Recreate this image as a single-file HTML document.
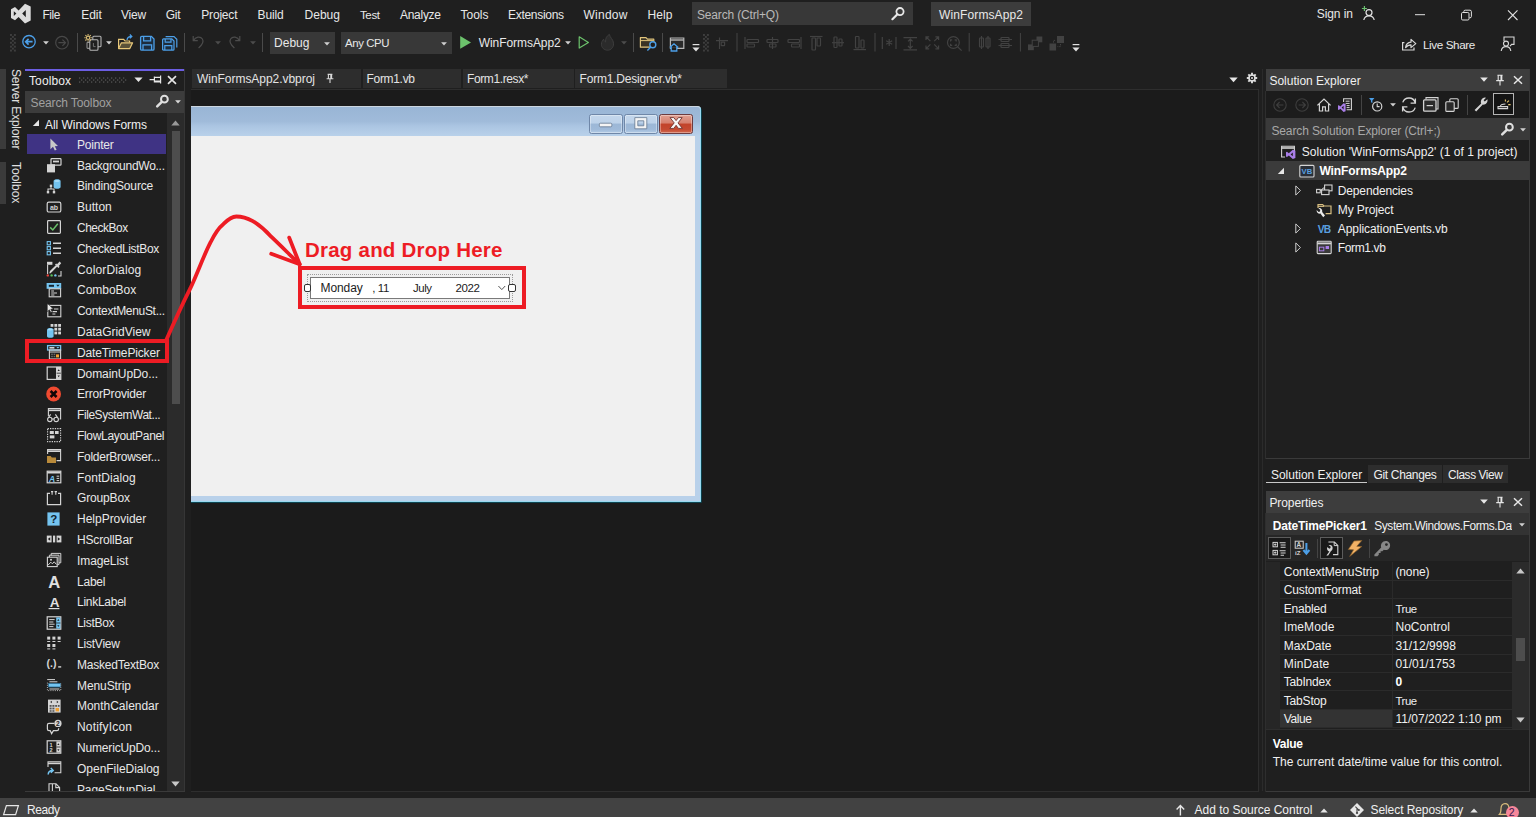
<!DOCTYPE html>
<html lang="en"><head><meta charset="utf-8"><title>WinFormsApp2 - Microsoft Visual Studio</title>
<style>
html,body{margin:0;padding:0;}
body{width:1536px;height:817px;overflow:hidden;background:#1f1f1f;position:relative;font-family:"Liberation Sans",sans-serif;font-size:12px;color:#e6e6e6;}
.r{position:absolute;display:block;}
.t{position:absolute;white-space:pre;line-height:16px;display:block;}
</style></head>
<body>
<!-- p_base -->
<div class="r" style="left:0px;top:69px;width:6px;height:80px;background:#3b3b3b;"></div>
<div class="r" style="left:0px;top:162px;width:6px;height:42px;background:#3b3b3b;"></div>
<span class="t" style="left:24px;top:68.5px;transform-origin:0 0;transform:rotate(90deg);font-size:12px;color:#e0e0e0;letter-spacing:-0.2px;">Server Explorer</span>
<span class="t" style="left:24px;top:162px;transform-origin:0 0;transform:rotate(90deg);font-size:12px;color:#e0e0e0;">Toolbox</span>
<!-- p_top -->
<svg class="r" style="left:0px;top:0px;" width="40" height="28" viewBox="0 0 40 28"><path d="M25 3.8 L30.7 6.5 V20.4 L25 23.5 L18.6 16.9 L15 20.3 L11 18 V9.3 L15 7 L18.6 10.4 Z M13.8 11.2 V16 L16.4 13.6 Z M25.8 10 L22.2 13.6 L25.8 17.3 Z" fill="#dcdcdc" fill-rule="evenodd"/></svg>
<span class="t" style="left:42.50px;top:7px;font-size:11.92px;color:#e8e8e8;letter-spacing:-0.401px;">File</span>
<span class="t" style="left:81.25px;top:7px;font-size:12px;color:#e8e8e8;letter-spacing:-0.059px;">Edit</span>
<span class="t" style="left:121.00px;top:7px;font-size:12px;color:#e8e8e8;letter-spacing:-0.191px;">View</span>
<span class="t" style="left:165.75px;top:7px;font-size:12px;color:#e8e8e8;letter-spacing:-0.293px;">Git</span>
<span class="t" style="left:201.25px;top:7px;font-size:12px;color:#e8e8e8;letter-spacing:-0.182px;">Project</span>
<span class="t" style="left:257.50px;top:7px;font-size:12px;color:#e8e8e8;letter-spacing:-0.109px;">Build</span>
<span class="t" style="left:304.50px;top:7px;font-size:12px;color:#e8e8e8;letter-spacing:0.034px;">Debug</span>
<span class="t" style="left:360.00px;top:7px;font-size:11.56px;color:#e8e8e8;letter-spacing:-0.400px;">Test</span>
<span class="t" style="left:400.00px;top:7px;font-size:12px;color:#e8e8e8;letter-spacing:-0.283px;">Analyze</span>
<span class="t" style="left:460.50px;top:7px;font-size:12px;color:#e8e8e8;letter-spacing:-0.002px;">Tools</span>
<span class="t" style="left:508.00px;top:7px;font-size:12px;color:#e8e8e8;letter-spacing:-0.300px;">Extensions</span>
<span class="t" style="left:583.50px;top:7px;font-size:12px;color:#e8e8e8;letter-spacing:0.258px;">Window</span>
<span class="t" style="left:647.50px;top:7px;font-size:12px;color:#e8e8e8;letter-spacing:0.105px;">Help</span>
<div class="r" style="left:692px;top:2.4px;width:221px;height:22.3px;background:#383838;"></div>
<span class="t" style="left:697.00px;top:7px;font-size:12px;color:#b8b8b8;letter-spacing:-0.168px;">Search (Ctrl+Q)</span>
<svg class="r" style="left:890px;top:6px;" width="16" height="16" viewBox="0 0 16 16"><circle cx="10" cy="5.6" r="3.6" fill="none" stroke="#e8e8e8" stroke-width="1.8"/><path d="M7.4 8.2 L2.4 13.2" stroke="#e8e8e8" stroke-width="2.2" stroke-linecap="round"/></svg>
<div class="r" style="left:931px;top:2px;width:100px;height:24.2px;background:#3c3c3c;"></div>
<span class="t" style="left:939.00px;top:7px;font-size:12px;color:#e8e8e8;letter-spacing:0.119px;">WinFormsApp2</span>
<span class="t" style="left:1316.70px;top:6px;font-size:12px;color:#e8e8e8;letter-spacing:-0.066px;">Sign in</span>
<svg class="r" style="left:1360px;top:6px;" width="16" height="16" viewBox="0 0 16 16"><circle cx="9" cy="6.6" r="3" fill="none" stroke="#e0e0e0" stroke-width="1.2"/><path d="M3.8 14 C4.4 10.6 6.6 9.8 9 9.8 C11.4 9.8 13.6 10.6 14.2 14" fill="none" stroke="#e0e0e0" stroke-width="1.2"/><path d="M4.4 0 V5 M1.9 2.5 H6.9" stroke="#6cc070" stroke-width="1.2"/></svg>
<svg class="r" style="left:1412px;top:7px;" width="16" height="16" viewBox="0 0 16 16"><path d="M3 7.7 H13" stroke="#e0e0e0" stroke-width="1"/></svg>
<svg class="r" style="left:1458px;top:7px;" width="16" height="16" viewBox="0 0 16 16"><rect x="3.5" y="5.5" width="7.5" height="7.5" rx="1.2" fill="none" stroke="#e0e0e0" stroke-width="1"/><path d="M5.8 5.2 V4.6 Q5.8 3.2 7.2 3.2 H12 Q13.4 3.2 13.4 4.6 V9.4 Q13.4 10.8 12 10.8 H11.3" fill="none" stroke="#e0e0e0" stroke-width="1"/></svg>
<svg class="r" style="left:1505px;top:7px;" width="16" height="16" viewBox="0 0 16 16"><path d="M3 3.3 L12.5 13 M12.5 3.3 L3 13" stroke="#e0e0e0" stroke-width="1.1"/></svg>
<svg class="r" style="left:10px;top:34px;" width="6" height="18" viewBox="0 0 6 18"><rect x="0.00" y="0.00" width="1.95" height="1.95" fill="#3e3e3e"/><rect x="3.90" y="0.00" width="1.95" height="1.95" fill="#3e3e3e"/><rect x="1.95" y="1.95" width="1.95" height="1.95" fill="#3e3e3e"/><rect x="0.00" y="3.90" width="1.95" height="1.95" fill="#3e3e3e"/><rect x="3.90" y="3.90" width="1.95" height="1.95" fill="#3e3e3e"/><rect x="1.95" y="5.85" width="1.95" height="1.95" fill="#3e3e3e"/><rect x="0.00" y="7.80" width="1.95" height="1.95" fill="#3e3e3e"/><rect x="3.90" y="7.80" width="1.95" height="1.95" fill="#3e3e3e"/><rect x="1.95" y="9.75" width="1.95" height="1.95" fill="#3e3e3e"/><rect x="0.00" y="11.70" width="1.95" height="1.95" fill="#3e3e3e"/><rect x="3.90" y="11.70" width="1.95" height="1.95" fill="#3e3e3e"/><rect x="1.95" y="13.65" width="1.95" height="1.95" fill="#3e3e3e"/><rect x="0.00" y="15.60" width="1.95" height="1.95" fill="#3e3e3e"/><rect x="3.90" y="15.60" width="1.95" height="1.95" fill="#3e3e3e"/></svg>
<svg class="r" style="left:21.2px;top:34.3px;" width="16" height="16" viewBox="0 0 16 16"><circle cx="8" cy="7.7" r="6.2" fill="none" stroke="#4c9fe8" stroke-width="1.3"/><path d="M11.6 7.7 H4.8 M7.6 4.8 L4.7 7.7 L7.6 10.6" fill="none" stroke="#4c9fe8" stroke-width="1.7"/></svg>
<svg class="r" style="left:43px;top:41.4px;" width="6" height="4" viewBox="0 0 6 4"><path d="M0.1 0.3 H5.9 L3 3.6 Z" fill="#d0d0d0"/></svg>
<svg class="r" style="left:53.7px;top:35px;" width="16" height="16" viewBox="0 0 16 16"><circle cx="8" cy="7.7" r="6.3" fill="none" stroke="#484848" stroke-width="1.2"/><path d="M4.4 7.7 H11.4 M8.4 4.6 L11.5 7.7 L8.4 10.8" fill="none" stroke="#484848" stroke-width="1.2"/></svg>
<div class="r" style="left:77.0px;top:33px;width:1.0px;height:19px;background:#4a4a4a;"></div>
<svg class="r" style="left:82px;top:32px;" width="22" height="22" viewBox="82 32 22 22"><g fill="#1f1f1f" stroke="#b4b4b4" stroke-width="1.1"><rect x="92.8" y="36.3" width="8.2" height="10.4" rx="1"/><rect x="87" y="42.4" width="5" height="6" rx="0.8" stroke="#909090"/><rect x="89.8" y="39.8" width="8.2" height="10.4" rx="1"/></g><path d="M93.4 43 V46.6 H95.6" fill="none" stroke="#707070" stroke-width="1"/><g stroke="#d8bc74" stroke-width="1.1" fill="none"><circle cx="88.1" cy="37.8" r="1.7" fill="#1f1f1f"/><path d="M88.1 34 V35.4 M88.1 40.2 V41.6 M84.3 37.8 H85.7 M90.5 37.8 H91.9 M85.4 35.1 L86.4 36.1 M89.8 39.5 L90.8 40.5 M90.8 35.1 L89.8 36.1 M86.4 39.5 L85.4 40.5"/></g></svg>
<svg class="r" style="left:106px;top:41.4px;" width="6" height="4" viewBox="0 0 6 4"><path d="M0.1 0.3 H5.9 L3 3.6 Z" fill="#d0d0d0"/></svg>
<svg class="r" style="left:117px;top:34px;" width="18" height="18" viewBox="0 0 18 18"><path d="M1.6 14.6 V5.4 H6.6 L8 7 H12.6 V8.6" fill="none" stroke="#e8c87a" stroke-width="1.2"/><path d="M1.6 14.6 L4.4 8.8 H15.6 L12.8 14.6 Z" fill="#5b5238" stroke="#e8c87a" stroke-width="1.2" stroke-linejoin="round"/><path d="M10 6 C10.4 3.4 12.2 2.4 14.6 2.4 M12.8 0.6 L14.8 2.4 L12.8 4.4" fill="none" stroke="#4c9fe8" stroke-width="1.3"/></svg>
<svg class="r" style="left:139px;top:35px;" width="17" height="17" viewBox="0 0 17 17"><path d="M1.6 2.6 Q1.6 1.4 2.8 1.4 H12.4 L15 4 V14 Q15 15.2 13.8 15.2 H2.8 Q1.6 15.2 1.6 14 Z" fill="#1d2c3c" stroke="#4c9fe8" stroke-width="1.3"/><path d="M4.6 1.6 V5.8 H11.6 V1.6 M4 15 V9.8 H12.6 V15" fill="none" stroke="#4c9fe8" stroke-width="1.3"/></svg>
<svg class="r" style="left:160.5px;top:35px;" width="17" height="17" viewBox="0 0 17 17"><path d="M4.6 1.6 H13 L15.8 4.2 V12.4" fill="none" stroke="#4c9fe8" stroke-width="1.2"/><path d="M1.6 4.8 Q1.6 3.8 2.6 3.8 H10.8 L13 6 V14.2 Q13 15.2 12 15.2 H2.6 Q1.6 15.2 1.6 14.2 Z" fill="#1d2c3c" stroke="#4c9fe8" stroke-width="1.2"/><path d="M4.2 4 V7.2 H10 V4 M3.8 15 V10.6 H10.8 V15" fill="none" stroke="#4c9fe8" stroke-width="1.2"/></svg>
<div class="r" style="left:183.5px;top:33px;width:1.0px;height:19px;background:#4a4a4a;"></div>
<svg class="r" style="left:191px;top:34px;" width="16" height="16" viewBox="0 0 16 16"><path d="M2.2 2 V6.6 H6.8 M2.6 6.4 C4.4 2.6 9.4 2 11.4 5 C13 7.6 11.6 10.4 7.6 14" fill="none" stroke="#4c4c4c" stroke-width="1.2"/></svg>
<svg class="r" style="left:214.5px;top:41.4px;" width="6" height="4" viewBox="0 0 6 4"><path d="M0.1 0.3 H5.9 L3 3.6 Z" fill="#4c4c4c"/></svg>
<svg class="r" style="left:226px;top:34px;" width="16" height="16" viewBox="0 0 16 16"><path d="M13.8 2 V6.6 H9.2 M13.4 6.4 C11.6 2.6 6.6 2 4.6 5 C3 7.6 4.4 10.4 8.4 14" fill="none" stroke="#4c4c4c" stroke-width="1.2"/></svg>
<svg class="r" style="left:249.5px;top:41.4px;" width="6" height="4" viewBox="0 0 6 4"><path d="M0.1 0.3 H5.9 L3 3.6 Z" fill="#4c4c4c"/></svg>
<div class="r" style="left:262.0px;top:33px;width:1.0px;height:19px;background:#4a4a4a;"></div>
<div class="r" style="left:270px;top:32px;width:64.5px;height:21.5px;background:#383838;"></div>
<span class="t" style="left:274.00px;top:35px;font-size:12px;color:#e8e8e8;letter-spacing:0.034px;">Debug</span>
<svg class="r" style="left:323.5px;top:41.9px;" width="6" height="4" viewBox="0 0 6 4"><path d="M0.1 0.3 H5.9 L3 3.6 Z" fill="#d0d0d0"/></svg>
<div class="r" style="left:341px;top:32px;width:110.5px;height:21.5px;background:#383838;"></div>
<span class="t" style="left:345.00px;top:35px;font-size:11.41px;color:#e8e8e8;letter-spacing:-0.403px;">Any CPU</span>
<svg class="r" style="left:440.5px;top:41.9px;" width="6" height="4" viewBox="0 0 6 4"><path d="M0.1 0.3 H5.9 L3 3.6 Z" fill="#d0d0d0"/></svg>
<svg class="r" style="left:459px;top:35px;" width="14" height="15" viewBox="0 0 14 15"><path d="M1.2 1 L12 7.4 L1.2 13.8 Z" fill="#6cc26c"/></svg>
<span class="t" style="left:478.75px;top:35px;font-size:12px;color:#e8e8e8;letter-spacing:-0.063px;">WinFormsApp2</span>
<svg class="r" style="left:565px;top:41.4px;" width="6" height="4" viewBox="0 0 6 4"><path d="M0.1 0.3 H5.9 L3 3.6 Z" fill="#d0d0d0"/></svg>
<svg class="r" style="left:577px;top:35px;" width="14" height="15" viewBox="0 0 14 15"><path d="M2.2 1.8 L11.4 7.4 L2.2 13 Z" fill="none" stroke="#6cc26c" stroke-width="1.2" stroke-linejoin="round"/></svg>
<svg class="r" style="left:599px;top:33px;" width="18" height="19" viewBox="0 0 18 19"><path d="M10.4 1.4 C10.6 4.4 14.6 6.4 14.6 10.8 C14.6 14.6 11.8 17.2 8.6 17.2 C5.2 17.2 2.4 14.8 2.4 11.2 C2.4 9 3.6 7.4 4.6 6.2 C5 7.8 5.6 8.6 6.6 9 C6.2 5.4 7.8 2.8 10.4 1.4 Z" fill="#2b2b2b" stroke="#3d3d3d" stroke-width="1"/></svg>
<svg class="r" style="left:620.75px;top:41.4px;" width="6" height="4" viewBox="0 0 6 4"><path d="M0.1 0.3 H5.9 L3 3.6 Z" fill="#4c4c4c"/></svg>
<div class="r" style="left:632.5px;top:33px;width:1.0px;height:19px;background:#4a4a4a;"></div>
<svg class="r" style="left:638px;top:33px;" width="20" height="20" viewBox="638 33 20 20"><path d="M640.4 47.2 V37.6 H646 L647.4 39.2 H653.8 V47.2 Z" fill="#3a3325" stroke="#e0c47c" stroke-width="1.2" stroke-linejoin="round"/><path d="M640.6 40.6 H653.6" stroke="#e0c47c" stroke-width="1"/><circle cx="652.8" cy="44.8" r="3" fill="#1f1f1f" stroke="#4c9fe8" stroke-width="1.4"/><path d="M650.6 47.2 L647.4 50.6" stroke="#4c9fe8" stroke-width="1.4"/></svg>
<div class="r" style="left:662.0px;top:33px;width:1.0px;height:19px;background:#4a4a4a;"></div>
<svg class="r" style="left:667px;top:34px;" width="20" height="20" viewBox="667 34 20 20"><path d="M670.4 38 H683.8 V48.4 H670.4 Z" fill="#2a2a2a" stroke="#b8b8b8" stroke-width="1.2"/><path d="M670.4 40 H683.8" stroke="#b8b8b8" stroke-width="1.4"/><path d="M669.8 47.6 L674 43.8 L678.2 47.6 M671.2 46.8 V51 H676.8 V46.8" fill="#1f1f1f" stroke="#4c9fe8" stroke-width="1.3"/></svg>
<svg class="r" style="left:692.2px;top:43.9px;" width="8" height="9" viewBox="0 0 8 9"><path d="M0.6 0.6 H7.4" stroke="#e0e0e0" stroke-width="1.2"/><path d="M0.4 3.4 H7.6 L4 7.4 Z" fill="#e0e0e0"/></svg>
<svg class="r" style="left:703px;top:34px;" width="6" height="18" viewBox="0 0 6 18"><rect x="0.00" y="0.00" width="1.95" height="1.95" fill="#3e3e3e"/><rect x="3.90" y="0.00" width="1.95" height="1.95" fill="#3e3e3e"/><rect x="1.95" y="1.95" width="1.95" height="1.95" fill="#3e3e3e"/><rect x="0.00" y="3.90" width="1.95" height="1.95" fill="#3e3e3e"/><rect x="3.90" y="3.90" width="1.95" height="1.95" fill="#3e3e3e"/><rect x="1.95" y="5.85" width="1.95" height="1.95" fill="#3e3e3e"/><rect x="0.00" y="7.80" width="1.95" height="1.95" fill="#3e3e3e"/><rect x="3.90" y="7.80" width="1.95" height="1.95" fill="#3e3e3e"/><rect x="1.95" y="9.75" width="1.95" height="1.95" fill="#3e3e3e"/><rect x="0.00" y="11.70" width="1.95" height="1.95" fill="#3e3e3e"/><rect x="3.90" y="11.70" width="1.95" height="1.95" fill="#3e3e3e"/><rect x="1.95" y="13.65" width="1.95" height="1.95" fill="#3e3e3e"/><rect x="0.00" y="15.60" width="1.95" height="1.95" fill="#3e3e3e"/><rect x="3.90" y="15.60" width="1.95" height="1.95" fill="#3e3e3e"/></svg>
<svg class="r" style="left:710px;top:30px;" width="385" height="26" viewBox="710 30 385 26"><g fill="none" stroke="#424242" stroke-width="1.2"><path d="M716 40.6 H728 M719.5 37.5 V49"/><rect x="721.2" y="42.2" width="3.4" height="3.4" rx="0.4"/><path d="M745 37 V49"/><rect x="747" y="39.5" width="11.5" height="3.0" rx="0.7"/><rect x="747" y="44" width="7.5" height="3" rx="0.7"/><path d="M772.5 37 V49"/><rect x="767" y="39.5" width="11" height="3.0" rx="0.7"/><rect x="769.5" y="44" width="6.5" height="3" rx="0.7"/><path d="M801 37 V49"/><rect x="788" y="39.5" width="11.5" height="3.0" rx="0.7"/><rect x="791.5" y="44" width="8.0" height="3" rx="0.7"/><path d="M810 36.5 H822.5"/><rect x="812" y="38" width="3.5" height="12" rx="0.7"/><rect x="817" y="38" width="3.5" height="8" rx="0.7"/><path d="M832 42.7 H844"/><rect x="834" y="37" width="3" height="10.5" rx="0.7"/><rect x="839" y="39" width="3" height="7" rx="0.7"/><path d="M853.5 49.6 H866"/><rect x="855.5" y="36.5" width="3.5" height="11.5" rx="0.7"/><rect x="861" y="40" width="3" height="8" rx="0.7"/><path d="M882.3 37 V49 M896 37 V49 M889.2 39 V46 M886.2 40.8 L892.2 44.2 M892.2 40.8 L886.2 44.2"/><path d="M903.5 37.6 H917 M903.5 49.8 H917 M910.3 39 V48.4 M908 41.4 L910.3 39 L912.6 41.4 M908 46 L910.3 48.4 L912.6 46"/><path d="M926 40 V36.8 H929.2 M935.4 36.8 H938.6 V40 M938.6 45.6 V48.8 H935.4 M929.2 48.8 H926 V45.6 M926.2 37 L930.4 41.2 M938.4 37 L934.2 41.2 M938.4 48.6 L934.2 44.4 M926.2 48.6 L930.4 44.4"/><circle cx="953.4" cy="42.5" r="5.9"/><path d="M957.6 46.8 L961.6 50.6 M950.6 41.4 V39.8 H952.2 M954.6 39.8 H956.2 V41.4 M956.2 43.8 V45.4 H954.6 M952.2 45.4 H950.6 V43.8"/><path d="M981.5 36 V49 M988 36 V49"/><rect x="979.5" y="38" width="4.0" height="9" rx="0.7"/><rect x="986" y="38" width="4" height="9" rx="0.7"/><path d="M998.5 39.5 H1012 M998.5 45.5 H1012"/><rect x="1001" y="37.5" width="8" height="4.0" rx="0.7"/><rect x="1001" y="43.5" width="8" height="4.0" rx="0.7"/></g><g fill="#424242"><rect x="1036.5" y="36.5" width="5.8" height="5.8"/><rect x="1028" y="44.4" width="5.8" height="5.8"/><rect x="1057" y="36" width="7" height="7"/><rect x="1049.5" y="43.5" width="6.6" height="7"/></g><rect x="1032.2" y="40.2" width="6.2" height="6.2" fill="#1f1f1f" stroke="#424242" stroke-width="1"/><path d="M1053.5 42.6 V40.4 H1056 M1060.5 44 V46.6 H1057.5" fill="none" stroke="#424242" stroke-width="1" stroke-dasharray="1.4 1"/><path d="M737 33 V51.5" stroke="#444" stroke-width="1"/><path d="M875 33 V51.5" stroke="#444" stroke-width="1"/><path d="M969.2 33 V51.5" stroke="#444" stroke-width="1"/><path d="M1020.4 33 V51.5" stroke="#444" stroke-width="1"/></svg>
<svg class="r" style="left:1072.2px;top:44.1px;" width="8" height="9" viewBox="0 0 8 9"><path d="M0.6 0.6 H7.4" stroke="#e0e0e0" stroke-width="1.2"/><path d="M0.4 3.4 H7.6 L4 7.4 Z" fill="#e0e0e0"/></svg>
<svg class="r" style="left:1401px;top:36px;" width="17" height="16" viewBox="0 0 17 16"><path d="M3.4 6.6 H1.6 V14 H13 V11.6" fill="none" stroke="#d8d8d8" stroke-width="1.2"/><path d="M4.6 11.6 C5 8 7.4 6.4 10 6.2 V3.4 L14.8 7.6 L10 11.6 V8.8 C7.8 8.8 6 9.6 4.6 11.6 Z" fill="none" stroke="#d8d8d8" stroke-width="1.2" stroke-linejoin="round"/></svg>
<span class="t" style="left:1423.00px;top:37px;font-size:11.69px;color:#e8e8e8;letter-spacing:-0.399px;">Live Share</span>
<svg class="r" style="left:1499px;top:35px;" width="17" height="17" viewBox="0 0 17 17"><path d="M5 6 V2 H15 V9.4 H12.6 L11 11.2" fill="none" stroke="#d8d8d8" stroke-width="1.1"/><circle cx="7" cy="8.6" r="2.5" fill="#1f1f1f" stroke="#d8d8d8" stroke-width="1.1"/><path d="M2.2 16 C2.6 12.6 4.6 11.6 7 11.6 C9.4 11.6 11.4 12.6 11.8 16" fill="none" stroke="#d8d8d8" stroke-width="1.1"/></svg>
<!-- p_toolbox -->
<div class="r" style="left:25px;top:69.2px;width:159px;height:1.8999999999999915px;background:#6c5ee2;"></div>
<div class="r" style="left:25px;top:71px;width:159px;height:20px;background:#1f1f1f;"></div>
<span class="t" style="left:29.00px;top:73px;font-size:12px;color:#f0f0f0;letter-spacing:0.106px;">Toolbox</span>
<svg class="r" style="left:79px;top:77px;" width="49" height="7" viewBox="0 0 49 7"><rect x="0" y="0.4" width="1.3" height="1.3" fill="#555"/><rect x="4" y="0.4" width="1.3" height="1.3" fill="#555"/><rect x="8" y="0.4" width="1.3" height="1.3" fill="#555"/><rect x="12" y="0.4" width="1.3" height="1.3" fill="#555"/><rect x="16" y="0.4" width="1.3" height="1.3" fill="#555"/><rect x="20" y="0.4" width="1.3" height="1.3" fill="#555"/><rect x="24" y="0.4" width="1.3" height="1.3" fill="#555"/><rect x="28" y="0.4" width="1.3" height="1.3" fill="#555"/><rect x="32" y="0.4" width="1.3" height="1.3" fill="#555"/><rect x="36" y="0.4" width="1.3" height="1.3" fill="#555"/><rect x="40" y="0.4" width="1.3" height="1.3" fill="#555"/><rect x="44" y="0.4" width="1.3" height="1.3" fill="#555"/><rect x="2" y="2.4" width="1.3" height="1.3" fill="#555"/><rect x="6" y="2.4" width="1.3" height="1.3" fill="#555"/><rect x="10" y="2.4" width="1.3" height="1.3" fill="#555"/><rect x="14" y="2.4" width="1.3" height="1.3" fill="#555"/><rect x="18" y="2.4" width="1.3" height="1.3" fill="#555"/><rect x="22" y="2.4" width="1.3" height="1.3" fill="#555"/><rect x="26" y="2.4" width="1.3" height="1.3" fill="#555"/><rect x="30" y="2.4" width="1.3" height="1.3" fill="#555"/><rect x="34" y="2.4" width="1.3" height="1.3" fill="#555"/><rect x="38" y="2.4" width="1.3" height="1.3" fill="#555"/><rect x="42" y="2.4" width="1.3" height="1.3" fill="#555"/><rect x="46" y="2.4" width="1.3" height="1.3" fill="#555"/><rect x="0" y="4.4" width="1.3" height="1.3" fill="#555"/><rect x="4" y="4.4" width="1.3" height="1.3" fill="#555"/><rect x="8" y="4.4" width="1.3" height="1.3" fill="#555"/><rect x="12" y="4.4" width="1.3" height="1.3" fill="#555"/><rect x="16" y="4.4" width="1.3" height="1.3" fill="#555"/><rect x="20" y="4.4" width="1.3" height="1.3" fill="#555"/><rect x="24" y="4.4" width="1.3" height="1.3" fill="#555"/><rect x="28" y="4.4" width="1.3" height="1.3" fill="#555"/><rect x="32" y="4.4" width="1.3" height="1.3" fill="#555"/><rect x="36" y="4.4" width="1.3" height="1.3" fill="#555"/><rect x="40" y="4.4" width="1.3" height="1.3" fill="#555"/><rect x="44" y="4.4" width="1.3" height="1.3" fill="#555"/></svg>
<svg class="r" style="left:134px;top:77px;" width="9" height="6" viewBox="0 0 9 6"><path d="M0.4 0.6 H8.6 L4.5 5 Z" fill="#e6e6e6"/></svg>
<svg class="r" style="left:149px;top:74.4px;" width="14" height="11" viewBox="0 0 14 11"><path d="M0.6 5.6 H5.4 M5.4 2.6 V8.6 M5.4 3.4 H11.4 M5.4 7.2 H11.4 M5.4 8 H11.4 M11.6 1.6 V9.6" fill="none" stroke="#e6e6e6" stroke-width="1.2"/></svg>
<svg class="r" style="left:167px;top:75px;" width="10" height="10" viewBox="0 0 10 10"><path d="M1 1.2 L9 8.8 M9 1.2 L1 8.8" stroke="#e6e6e6" stroke-width="1.7"/></svg>
<div class="r" style="left:25px;top:91px;width:159px;height:22px;background:#3c3c3c;"></div>
<span class="t" style="left:30.50px;top:95px;font-size:12px;color:#a0a0a0;letter-spacing:-0.115px;">Search Toolbox</span>
<svg class="r" style="left:155px;top:94px;" width="15" height="15" viewBox="0 0 15 15"><circle cx="9.4" cy="5.2" r="3.4" fill="none" stroke="#e0e0e0" stroke-width="2"/><path d="M6.8 7.8 L2.2 12.4" stroke="#e0e0e0" stroke-width="2.5" stroke-linecap="round"/></svg>
<svg class="r" style="left:174.5px;top:100px;" width="6" height="4" viewBox="0 0 6 4"><path d="M0.1 0.3 H5.9 L3 3.6 Z" fill="#d8d8d8"/></svg>
<div class="r" style="left:25px;top:113px;width:159px;height:678px;background:#1f1f1f;"></div>
<div class="r" style="left:25px;top:790.5px;width:160px;height:1.0px;background:#3a3a3a;"></div>
<div class="r" style="left:184px;top:69px;width:1px;height:722px;background:#363636;"></div>
<div class="r" style="left:167px;top:113px;width:17px;height:678px;background:#2b2b2b;"></div>
<div class="r" style="left:171.5px;top:131px;width:8.5px;height:273px;background:#4d4d4d;"></div>
<svg class="r" style="left:171px;top:119.5px;" width="9" height="6" viewBox="0 0 9 6"><path d="M0.3 5.6 H8.7 L4.5 0.6 Z" fill="#999"/></svg>
<svg class="r" style="left:171px;top:780.5px;" width="9" height="6" viewBox="0 0 9 6"><path d="M0.3 0.4 H8.7 L4.5 5.4 Z" fill="#c8c8c8"/></svg>
<svg class="r" style="left:32px;top:119px;" width="8" height="8" viewBox="0 0 8 8"><path d="M7 0.8 V7 H0.8 Z" fill="#e6e6e6"/></svg>
<span class="t" style="left:45.00px;top:117px;font-size:12px;color:#f0f0f0;letter-spacing:-0.043px;">All Windows Forms</span>
<div class="r" style="left:27px;top:134.3px;width:139px;height:19.899999999999977px;background:#3f3384;"></div>
<div class="r" style="left:25px;top:113px;width:142px;height:677.5px;overflow:hidden;">
<svg class="r" style="left:20.5px;top:23.25px;" width="16" height="16" viewBox="0 0 16 16"><path d="M4.4 2.4 V13.2 L7 10.8 L8.8 14.6 L10.6 13.8 L8.8 10.2 L12 10 Z" fill="#c8c8c8"/></svg>
<span class="t" style="left:52.00px;top:24px;font-size:12px;color:#e8e8e8;letter-spacing:-0.211px;">Pointer</span>
<svg class="r" style="left:20.5px;top:44.05px;" width="16" height="16" viewBox="0 0 16 16"><rect x="5" y="1.6" width="10" height="6.6" rx="0.8" fill="none" stroke="#d4d4d4" stroke-width="1.2"/><rect x="7" y="3.6" width="6" height="1.8" fill="#d4d4d4"/><rect x="1" y="7.2" width="8" height="8.2" fill="#d4d4d4"/></svg>
<span class="t" style="left:52.00px;top:45px;font-size:12px;color:#e8e8e8;letter-spacing:-0.273px;">BackgroundWo...</span>
<svg class="r" style="left:20.5px;top:64.85px;" width="16" height="16" viewBox="0 0 16 16"><path d="M7.6 3 C7.6 0.6 14.6 0.6 14.6 3 V9 C14.6 11.4 7.6 11.4 7.6 9 Z" fill="#74c4f0"/><ellipse cx="11.1" cy="3" rx="2.6" ry="1" fill="#a8dcf8"/><path d="M5 8.6 V11 M2 13.6 V11 H8 V13.6" fill="none" stroke="#d4d4d4" stroke-width="1.1"/><rect x="3.8" y="6.6" width="2.4" height="2.4" fill="#d4d4d4"/><rect x="0.8" y="13" width="2.4" height="2.4" fill="#d4d4d4"/><rect x="6.8" y="13" width="2.4" height="2.4" fill="#d4d4d4"/></svg>
<span class="t" style="left:52.00px;top:65px;font-size:12px;color:#e8e8e8;letter-spacing:-0.150px;">BindingSource</span>
<svg class="r" style="left:20.5px;top:85.65px;" width="16" height="16" viewBox="0 0 16 16"><rect x="1.2" y="3.2" width="13.6" height="9.8" rx="1.6" fill="none" stroke="#d4d4d4" stroke-width="1.2"/><text x="3.9" y="10.6" font-family="Liberation Sans,sans-serif" font-size="7" font-weight="bold" fill="#d4d4d4">ab</text></svg>
<span class="t" style="left:52.00px;top:86px;font-size:12px;color:#e8e8e8;letter-spacing:0.012px;">Button</span>
<svg class="r" style="left:20.5px;top:106.45px;" width="16" height="16" viewBox="0 0 16 16"><rect x="1.6" y="1.6" width="12.8" height="12.8" rx="0.8" fill="none" stroke="#d4d4d4" stroke-width="1.2"/><path d="M4.2 8.4 L6.8 11 L11.8 4.8" fill="none" stroke="#6cc26c" stroke-width="1.5"/></svg>
<span class="t" style="left:52.00px;top:107px;font-size:11.86px;color:#e8e8e8;letter-spacing:-0.401px;">CheckBox</span>
<svg class="r" style="left:20.5px;top:127.25px;" width="16" height="16" viewBox="0 0 16 16"><g fill="none" stroke="#74c4f0" stroke-width="1.1"><rect x="1.2" y="1.6" width="3.2" height="3.2"/><rect x="1.2" y="6.6" width="3.2" height="3.2"/><rect x="1.2" y="11.6" width="3.2" height="3.2"/></g><path d="M7 3.2 H15 M7 8.2 H15 M7 13.2 H15" stroke="#d4d4d4" stroke-width="1.6"/></svg>
<span class="t" style="left:52.00px;top:128px;font-size:12px;color:#e8e8e8;letter-spacing:-0.343px;">CheckedListBox</span>
<svg class="r" style="left:20.5px;top:148.05px;" width="16" height="16" viewBox="0 0 16 16"><rect x="1" y="0.8" width="5.4" height="3" fill="#d4d4d4"/><path d="M1.6 4 V13 M12 15 H15 V10" fill="none" stroke="#d4d4d4" stroke-width="1.1"/><path d="M13.6 0.6 L15.2 2.2 L12.8 5 L13.6 5.8 L12.4 7 L9 3.6 L10.2 2.4 L11 3.2 Z" fill="#d4d4d4"/><path d="M10.6 5.4 L5.2 10.8 L4 11.8 L4.6 10.2 L10 4.8 Z" fill="#d4d4d4" stroke="#d4d4d4" stroke-width="1.2" stroke-linejoin="round"/><circle cx="1.8" cy="14.4" r="1.2" fill="#e8423a"/><circle cx="5.6" cy="14.4" r="1.2" fill="#5cc25c"/><circle cx="9.4" cy="14.4" r="1.2" fill="#74c4f0"/></svg>
<span class="t" style="left:52.00px;top:149px;font-size:12px;color:#e8e8e8;letter-spacing:0.155px;">ColorDialog</span>
<svg class="r" style="left:20.5px;top:168.85px;" width="16" height="16" viewBox="0 0 16 16"><rect x="0.6" y="1" width="14.6" height="5.8" fill="#74c4f0"/><rect x="2.8" y="2.8" width="5.2" height="2" fill="#16242e"/><path d="M10.2 2.8 H13.6 L11.9 4.8 Z" fill="#16242e"/><rect x="3.2" y="6.8" width="11.4" height="8" fill="none" stroke="#d4d4d4" stroke-width="1.1"/><path d="M5.2 9 H8 M5.2 11 H11 M5.2 13 H8.4" stroke="#d4d4d4" stroke-width="1"/></svg>
<span class="t" style="left:52.00px;top:169px;font-size:12px;color:#e8e8e8;letter-spacing:-0.016px;">ComboBox</span>
<svg class="r" style="left:20.5px;top:189.65px;" width="16" height="16" viewBox="0 0 16 16"><rect x="1.8" y="2.4" width="13" height="11.4" fill="none" stroke="#d4d4d4" stroke-width="1.1"/><path d="M8 6 H12.4 M6.4 8.6 H11 M6.4 11 H9.4" stroke="#d4d4d4" stroke-width="1.1"/><path d="M1.4 0.4 V8.6 L3.4 6.8 L4.8 9.6 L6.2 8.8 L4.8 6.2 L7.4 6 Z" fill="#e8e8e8" stroke="#1f1f1f" stroke-width="0.6"/></svg>
<span class="t" style="left:52.00px;top:190px;font-size:12px;color:#e8e8e8;letter-spacing:-0.314px;">ContextMenuSt...</span>
<svg class="r" style="left:20.5px;top:210.45px;" width="16" height="16" viewBox="0 0 16 16"><g fill="#d4d4d4"><rect x="4.6" y="1" width="2.8" height="2.8"/><rect x="8.4" y="1" width="2.8" height="2.8"/><rect x="12.2" y="1" width="2.8" height="2.8"/><rect x="8.4" y="4.8" width="2.8" height="2.8"/><rect x="12.2" y="4.8" width="2.8" height="2.8"/><rect x="8.4" y="8.6" width="2.8" height="2.8"/><rect x="12.2" y="8.6" width="2.8" height="2.8"/></g><path d="M1 6.6 C1 4.4 7.6 4.4 7.6 6.6 V13.2 C7.6 15.4 1 15.4 1 13.2 Z" fill="#74c4f0"/><ellipse cx="4.3" cy="6.6" rx="2.5" ry="0.9" fill="#a8dcf8"/></svg>
<span class="t" style="left:52.00px;top:211px;font-size:12px;color:#e8e8e8;letter-spacing:-0.032px;">DataGridView</span>
<svg class="r" style="left:20.5px;top:231.25px;" width="16" height="16" viewBox="0 0 16 16"><rect x="1.6" y="1.6" width="13" height="4.4" fill="none" stroke="#74c4f0" stroke-width="1.3"/><rect x="3.4" y="3" width="5" height="1.6" fill="#d4d4d4"/><path d="M10.4 3 H13.4 L11.9 4.6 Z" fill="#74c4f0"/><rect x="3.4" y="6" width="11.2" height="9" fill="none" stroke="#d4d4d4" stroke-width="1.1"/><path d="M3.4 8 H14.6" stroke="#d4d4d4" stroke-width="1"/><g fill="#6a6a6a"><rect x="5.2" y="9.6" width="1.6" height="1.4"/><rect x="7.6" y="9.6" width="1.6" height="1.4"/><rect x="5.2" y="11.8" width="1.6" height="1.4"/><rect x="7.6" y="11.8" width="1.6" height="1.4"/></g><rect x="10" y="10.4" width="3" height="3" fill="#f0a030"/></svg>
<span class="t" style="left:52.00px;top:232px;font-size:12px;color:#e8e8e8;letter-spacing:-0.147px;">DateTimePicker</span>
<svg class="r" style="left:20.5px;top:252.05px;" width="16" height="16" viewBox="0 0 16 16"><rect x="1.2" y="2" width="13.6" height="12.4" fill="none" stroke="#d4d4d4" stroke-width="1.2"/><path d="M10.6 2 V14.4 M10.6 8.2 H14.8" stroke="#d4d4d4" stroke-width="1.1"/><rect x="10.6" y="2" width="4.2" height="12.4" fill="#d4d4d4"/><path d="M11.6 6 H13.8 L12.7 4.2 Z M11.6 10.4 H13.8 L12.7 12.2 Z" fill="#1f1f1f"/><path d="M10.6 8.2 H14.8" stroke="#1f1f1f" stroke-width="0.8"/></svg>
<span class="t" style="left:52.00px;top:253px;font-size:12px;color:#e8e8e8;letter-spacing:-0.086px;">DomainUpDo...</span>
<svg class="r" style="left:20.5px;top:272.85px;" width="16" height="16" viewBox="0 0 16 16"><circle cx="7.6" cy="8" r="7.4" fill="#f04a30"/><path d="M4.6 5 L10.6 11 M10.6 5 L4.6 11" stroke="#140606" stroke-width="2.5"/></svg>
<span class="t" style="left:52.00px;top:273px;font-size:12px;color:#e8e8e8;letter-spacing:-0.175px;">ErrorProvider</span>
<svg class="r" style="left:20.5px;top:293.65px;" width="16" height="16" viewBox="0 0 16 16"><path d="M2.4 9 V1.6 H14.6 V12 H13.6" fill="none" stroke="#d4d4d4" stroke-width="1.1"/><path d="M2.4 3.4 H14.6" stroke="#d4d4d4" stroke-width="1.5"/><circle cx="3.8" cy="12.4" r="2.2" fill="none" stroke="#d4d4d4" stroke-width="1.1"/><circle cx="10.2" cy="12.4" r="2.2" fill="none" stroke="#d4d4d4" stroke-width="1.1"/><path d="M6 12 H8 M2.4 10.6 L4.6 7.4 M11.6 10.6 L9.4 7.4" fill="none" stroke="#d4d4d4" stroke-width="1.1"/></svg>
<span class="t" style="left:52.00px;top:294px;font-size:11.93px;color:#e8e8e8;letter-spacing:-0.398px;">FileSystemWat...</span>
<svg class="r" style="left:20.5px;top:314.45px;" width="16" height="16" viewBox="0 0 16 16"><rect x="1.6" y="1.6" width="13" height="13" fill="none" stroke="#d4d4d4" stroke-width="1.1" stroke-dasharray="1.3 1.1"/><rect x="3.8" y="4" width="4" height="3" fill="#d4d4d4"/><rect x="9" y="4" width="3.6" height="3" fill="#d4d4d4"/><rect x="3.8" y="8.4" width="4.6" height="3" fill="#d4d4d4"/></svg>
<span class="t" style="left:52.00px;top:315px;font-size:12px;color:#e8e8e8;letter-spacing:-0.325px;">FlowLayoutPanel</span>
<svg class="r" style="left:20.5px;top:335.25px;" width="16" height="16" viewBox="0 0 16 16"><path d="M1.6 6 V1.6 H14.6 V12.6 H10.6" fill="none" stroke="#d4d4d4" stroke-width="1.1"/><path d="M1.6 3.2 H14.6" stroke="#d4d4d4" stroke-width="1.6"/><path d="M1 8 H4.6 L5.8 9.4 H10 V15 H1 Z" fill="#b98a3a"/></svg>
<span class="t" style="left:52.00px;top:336px;font-size:12px;color:#e8e8e8;letter-spacing:-0.274px;">FolderBrowser...</span>
<svg class="r" style="left:20.5px;top:356.05px;" width="16" height="16" viewBox="0 0 16 16"><rect x="1.2" y="2.2" width="13.6" height="11.6" fill="none" stroke="#d4d4d4" stroke-width="1.2"/><path d="M1.2 3.6 H14.8" stroke="#d4d4d4" stroke-width="1.8"/><path d="M10.6 7.2 H13.2 M10.6 9.4 H13.2 M10.6 11.6 H13.2" stroke="#d4d4d4" stroke-width="1"/><text x="3" y="12.6" font-family="Liberation Sans,sans-serif" font-size="8.5" font-weight="bold" font-style="italic" fill="#74c4f0">A</text></svg>
<span class="t" style="left:52.00px;top:357px;font-size:12px;color:#e8e8e8;letter-spacing:0.080px;">FontDialog</span>
<svg class="r" style="left:20.5px;top:376.85px;" width="16" height="16" viewBox="0 0 16 16"><path d="M4 3.4 H1.4 V14.6 H14.6 V3.4 H12" fill="none" stroke="#d4d4d4" stroke-width="1.2"/><path d="M5 1.6 H7.2 M6.1 1.6 V4.8 M8.6 1.6 H11 M9.8 1.6 V4.8" stroke="#d4d4d4" stroke-width="1.1"/></svg>
<span class="t" style="left:52.00px;top:377px;font-size:12px;color:#e8e8e8;letter-spacing:-0.146px;">GroupBox</span>
<svg class="r" style="left:20.5px;top:397.65px;" width="16" height="16" viewBox="0 0 16 16"><rect x="1.4" y="1.4" width="12.2" height="13.2" fill="#74c4f0"/><text x="4.2" y="12.4" font-family="Liberation Sans,sans-serif" font-size="11.5" font-weight="bold" fill="#10222e">?</text></svg>
<span class="t" style="left:52.00px;top:398px;font-size:12px;color:#e8e8e8;letter-spacing:-0.010px;">HelpProvider</span>
<svg class="r" style="left:20.5px;top:418.45px;" width="16" height="16" viewBox="0 0 16 16"><rect x="0.8" y="4.6" width="4.8" height="6.8" fill="#d4d4d4"/><rect x="7" y="4.6" width="2.2" height="6.8" fill="#d4d4d4"/><rect x="10.6" y="4.6" width="4.8" height="6.8" fill="#d4d4d4"/><path d="M4.2 6.2 V9.8 L1.8 8 Z M11.8 6.2 V9.8 L14.2 8 Z" fill="#1f1f1f"/></svg>
<span class="t" style="left:52.00px;top:419px;font-size:12px;color:#e8e8e8;letter-spacing:-0.150px;">HScrollBar</span>
<svg class="r" style="left:20.5px;top:439.25px;" width="16" height="16" viewBox="0 0 16 16"><path d="M5.2 3.4 V1.4 H14.8 V10.8 H13 M3.4 5.2 V3.2 H13 V12.6 H11.4" fill="none" stroke="#d4d4d4" stroke-width="1"/><rect x="1.4" y="5.2" width="9.8" height="9.4" fill="#1f1f1f" stroke="#d4d4d4" stroke-width="1.1"/><path d="M2.2 13 L4.8 10.2 L6.4 11.8 L8.2 9.8 L10.4 12.4" fill="none" stroke="#d4d4d4" stroke-width="1"/><circle cx="5" cy="7.8" r="1" fill="#d4d4d4"/></svg>
<span class="t" style="left:52.00px;top:440px;font-size:12px;color:#e8e8e8;letter-spacing:-0.096px;">ImageList</span>
<svg class="r" style="left:20.5px;top:460.05px;" width="16" height="16" viewBox="0 0 16 16"><text x="2.2" y="14.5" font-family="Liberation Sans,sans-serif" font-size="16.6" font-weight="bold" fill="#e0e0e0">A</text></svg>
<span class="t" style="left:52.00px;top:461px;font-size:12px;color:#e8e8e8;letter-spacing:-0.216px;">Label</span>
<svg class="r" style="left:20.5px;top:480.85px;" width="16" height="16" viewBox="0 0 16 16"><text x="3.8" y="12.6" font-family="Liberation Sans,sans-serif" font-size="13.5" font-weight="bold" fill="#e0e0e0">A</text><path d="M2.6 14.6 H13.4" stroke="#e0e0e0" stroke-width="1.2"/></svg>
<span class="t" style="left:52.00px;top:481px;font-size:12px;color:#e8e8e8;letter-spacing:-0.265px;">LinkLabel</span>
<svg class="r" style="left:20.5px;top:501.65px;" width="16" height="16" viewBox="0 0 16 16"><rect x="1.2" y="1.8" width="13.6" height="12.4" fill="none" stroke="#d4d4d4" stroke-width="1.2"/><path d="M3.2 4.6 H8.6 M3.2 7 H7.4 M3.2 9.2 H8.6 M3.2 11.6 H7.4" stroke="#d4d4d4" stroke-width="1"/><rect x="10.2" y="2.4" width="4.2" height="11.2" fill="#74c4f0"/><path d="M11.2 5.8 H13.4 L12.3 4 Z M11.2 10.2 H13.4 L12.3 12 Z" fill="#1f1f1f"/><path d="M10.2 8 H14.4" stroke="#1f1f1f" stroke-width="0.8"/></svg>
<span class="t" style="left:52.00px;top:502px;font-size:12px;color:#e8e8e8;letter-spacing:-0.308px;">ListBox</span>
<svg class="r" style="left:20.5px;top:522.45px;" width="16" height="16" viewBox="0 0 16 16"><g fill="#d4d4d4"><rect x="1.2" y="1.6" width="3" height="3"/><rect x="6.4" y="1.6" width="3" height="3"/><rect x="11.6" y="1.6" width="3" height="3"/><rect x="1.2" y="9" width="3" height="3"/><rect x="6.4" y="9" width="3" height="3"/><rect x="1.2" y="6" width="3" height="1"/><rect x="6.4" y="6" width="3" height="1"/><rect x="11.6" y="6" width="3" height="1"/><rect x="1.2" y="13.4" width="3" height="1"/><rect x="6.4" y="13.4" width="3" height="1"/></g></svg>
<span class="t" style="left:52.00px;top:523px;font-size:12px;color:#e8e8e8;letter-spacing:-0.214px;">ListView</span>
<svg class="r" style="left:20.5px;top:543.25px;" width="16" height="16" viewBox="0 0 16 16"><text x="0.6" y="11.4" font-family="Liberation Sans,sans-serif" font-size="10.5" font-weight="bold" fill="#d4d4d4">(.)</text><rect x="12.2" y="10.2" width="3" height="1.4" fill="#d4d4d4"/></svg>
<span class="t" style="left:52.00px;top:544px;font-size:12px;color:#e8e8e8;letter-spacing:-0.205px;">MaskedTextBox</span>
<svg class="r" style="left:20.5px;top:564.05px;" width="16" height="16" viewBox="0 0 16 16"><path d="M1.2 2.6 H9 M3.4 4.8 H11.4" stroke="#d4d4d4" stroke-width="1"/><rect x="2.6" y="6.4" width="12" height="3.6" fill="#74c4f0" stroke="#2f6f95" stroke-width="0.8"/><path d="M3.4 12 H13.4" stroke="#d4d4d4" stroke-width="1"/><path d="M1.4 5.6 V13.6 H14.8 V6" fill="none" stroke="#d4d4d4" stroke-width="0.8" stroke-dasharray="1 1.2"/></svg>
<span class="t" style="left:52.00px;top:565px;font-size:12px;color:#e8e8e8;letter-spacing:-0.087px;">MenuStrip</span>
<svg class="r" style="left:20.5px;top:584.85px;" width="16" height="16" viewBox="0 0 16 16"><rect x="2" y="1.6" width="12.6" height="13" fill="#d4d4d4"/><path d="M5.8 2.8 V5.2 L4.2 4 Z M10.8 2.8 V5.2 L12.4 4 Z" fill="#1f1f1f"/><g fill="#555"><rect x="3.6" y="7" width="2" height="1.8"/><rect x="6.4" y="7" width="2" height="1.8"/><rect x="9.2" y="7" width="2" height="1.8"/><rect x="12" y="7" width="1.6" height="1.8"/><rect x="3.6" y="9.6" width="2" height="1.8"/><rect x="6.4" y="9.6" width="2" height="1.8"/><rect x="3.6" y="12.2" width="2" height="1.6"/><rect x="6.4" y="12.2" width="2" height="1.6"/></g><rect x="9.6" y="10" width="3.4" height="3.4" fill="#f0a030"/></svg>
<span class="t" style="left:52.00px;top:585px;font-size:12px;color:#e8e8e8;letter-spacing:-0.024px;">MonthCalendar</span>
<svg class="r" style="left:20.5px;top:605.65px;" width="16" height="16" viewBox="0 0 16 16"><path d="M8.4 4.4 H3 Q1.4 4.4 1.4 6 V10 Q1.4 11.6 3 11.6 H4.2 L5.6 14.6 L7.4 11.6 H11 Q12.6 11.6 12.6 10 V9.2" fill="none" stroke="#d4d4d4" stroke-width="1.2"/><circle cx="12" cy="4.4" r="3.6" fill="#d4d4d4"/><text x="10.1" y="6.8" font-family="Liberation Sans,sans-serif" font-size="6.6" font-weight="bold" fill="#1f1f1f">2</text></svg>
<span class="t" style="left:52.00px;top:606px;font-size:12px;color:#e8e8e8;letter-spacing:0.183px;">NotifyIcon</span>
<svg class="r" style="left:20.5px;top:626.45px;" width="16" height="16" viewBox="0 0 16 16"><rect x="1.2" y="1.8" width="13.6" height="12.4" fill="none" stroke="#d4d4d4" stroke-width="1.2"/><rect x="10.4" y="2.4" width="4" height="11.2" fill="#d4d4d4"/><path d="M11.3 6 H13.5 L12.4 4.2 Z M11.3 10.2 H13.5 L12.4 12 Z" fill="#1f1f1f"/><path d="M10.4 8 H14.4" stroke="#1f1f1f" stroke-width="0.8"/><text x="3.6" y="7.6" font-family="Liberation Sans,sans-serif" font-size="5.6" font-weight="bold" fill="#d4d4d4">1</text><text x="3.6" y="13" font-family="Liberation Sans,sans-serif" font-size="5.6" font-weight="bold" fill="#d4d4d4">2</text></svg>
<span class="t" style="left:52.00px;top:627px;font-size:12px;color:#e8e8e8;letter-spacing:-0.162px;">NumericUpDo...</span>
<svg class="r" style="left:20.5px;top:647.25px;" width="16" height="16" viewBox="0 0 16 16"><path d="M2 7 V1.8 H14.8 V12.8 H8.6" fill="none" stroke="#d4d4d4" stroke-width="1.1"/><path d="M2 3.4 H14.8" stroke="#d4d4d4" stroke-width="1.6"/><path d="M2.2 14.6 C2.2 11.4 4 10.4 6.8 10.4 M4.8 8 L7.2 10.4 L4.8 12.8" fill="none" stroke="#74c4f0" stroke-width="1.5"/></svg>
<span class="t" style="left:52.00px;top:648px;font-size:12px;color:#e8e8e8;letter-spacing:-0.017px;">OpenFileDialog</span>
<svg class="r" style="left:20.5px;top:668.05px;" width="16" height="16" viewBox="0 0 16 16"><path d="M3 16 V2.8 H10 L13.6 6.4 V16 M6.4 3 V16 M9.8 3 V6.6 H13.4" fill="none" stroke="#d4d4d4" stroke-width="1.1"/></svg>
<span class="t" style="left:52.00px;top:669px;font-size:12px;color:#e8e8e8;letter-spacing:-0.137px;">PageSetupDial...</span>
</div>
<!-- p_doc -->
<div class="r" style="left:192px;top:69.4px;width:168.60000000000002px;height:18.39999999999999px;background:#2d2d2d;"></div>
<span class="t" style="left:197.00px;top:71px;font-size:12px;color:#e4e4e4;letter-spacing:-0.039px;">WinFormsApp2.vbproj</span>
<div class="r" style="left:362.6px;top:69.4px;width:98.39999999999998px;height:18.39999999999999px;background:#2d2d2d;"></div>
<span class="t" style="left:366.50px;top:71px;font-size:12px;color:#e4e4e4;letter-spacing:-0.311px;">Form1.vb</span>
<div class="r" style="left:462.6px;top:69.4px;width:111.10000000000002px;height:18.39999999999999px;background:#2d2d2d;"></div>
<span class="t" style="left:467.00px;top:71px;font-size:12px;color:#e4e4e4;letter-spacing:-0.384px;">Form1.resx*</span>
<div class="r" style="left:575.4px;top:69.4px;width:152.10000000000002px;height:18.39999999999999px;background:#2d2d2d;"></div>
<span class="t" style="left:579.60px;top:71px;font-size:12px;color:#e4e4e4;letter-spacing:-0.214px;">Form1.Designer.vb*</span>
<svg class="r" style="left:325px;top:73px;" width="10" height="11" viewBox="0 0 10 11"><path d="M2.6 1.4 H7.4 M3.4 1.4 V5.6 M6.6 1.4 V5.6 M5.8 1.4 V5.6 M1.6 5.8 H8.4 M5 5.8 V10" fill="none" stroke="#d8d8d8" stroke-width="1.1"/></svg>
<svg class="r" style="left:1229px;top:77.4px;" width="9" height="6" viewBox="0 0 9 6"><path d="M0.3 0.5 H8.7 L4.5 5.2 Z" fill="#e6e6e6"/></svg>
<svg class="r" style="left:1245.8px;top:72.2px;" width="12" height="12" viewBox="0 0 12 12"><path d="M8.60 6.00 L11.20 6.00" stroke="#e0e0e0" stroke-width="1.9"/><path d="M7.84 7.84 L9.68 9.68" stroke="#e0e0e0" stroke-width="1.9"/><path d="M6.00 8.60 L6.00 11.20" stroke="#e0e0e0" stroke-width="1.9"/><path d="M4.16 7.84 L2.32 9.68" stroke="#e0e0e0" stroke-width="1.9"/><path d="M3.40 6.00 L0.80 6.00" stroke="#e0e0e0" stroke-width="1.9"/><path d="M4.16 4.16 L2.32 2.32" stroke="#e0e0e0" stroke-width="1.9"/><path d="M6.00 3.40 L6.00 0.80" stroke="#e0e0e0" stroke-width="1.9"/><path d="M7.84 4.16 L9.68 2.32" stroke="#e0e0e0" stroke-width="1.9"/><circle cx="6" cy="6" r="3" fill="none" stroke="#e0e0e0" stroke-width="1.5"/><circle cx="6" cy="6" r="1" fill="#e0e0e0"/></svg>
<div class="r" style="left:191px;top:89px;width:1068px;height:1px;background:#2e2e2e;"></div>
<div class="r" style="left:191px;top:90px;width:1067px;height:701px;background:#1b1b1b;"></div>
<div class="r" style="left:1258px;top:90px;width:1px;height:701.5px;background:#2e2e2e;"></div>
<div class="r" style="left:191px;top:790.5px;width:1068px;height:1.0px;background:#2e2e2e;"></div>
<div class="r" style="left:1262px;top:69px;width:1px;height:722px;background:#2b2b2b;"></div>
<div class="r" style="left:191px;top:106px;width:512px;height:398px;overflow:hidden;"><div class="r" style="left:-8px;top:0;width:518px;height:395.8px;background:#b9d1ea;border-radius:4px 4px 1px 1px;box-shadow:inset -0.8px -0.8px 0 #8fdcf3, inset 0 1px 0 #ccd6e0, 0.9px 1.1px 0 #0d4652;"></div><div class="r" style="left:-8px;top:1px;width:517px;height:29px;border-radius:3px 3px 0 0;background:linear-gradient(#99b5d5 0%,#a0bbda 50%,#abc5e2 65%,#b9d1ea 100%);"></div><div class="r" style="left:0;top:29.6px;width:504px;height:360.4px;background:#f0f0f0;"></div></div>
<div class="r" style="left:589.0px;top:114.2px;width:31.799999999999955px;height:17.4px;border:1px solid #6f87a8;border-radius:2.5px;background:linear-gradient(#c4d7ec 0%,#bdd2e9 45%,#9cb7d6 50%,#9fbad9 80%,#b4cce6 100%);box-shadow:inset 0 0 0 1px rgba(255,255,255,0.35);"></div>
<div class="r" style="left:624.1px;top:114.2px;width:31.799999999999955px;height:17.4px;border:1px solid #6f87a8;border-radius:2.5px;background:linear-gradient(#c4d7ec 0%,#bdd2e9 45%,#9cb7d6 50%,#9fbad9 80%,#b4cce6 100%);box-shadow:inset 0 0 0 1px rgba(255,255,255,0.35);"></div>
<div class="r" style="left:659.2px;top:114.2px;width:32.09999999999991px;height:17.4px;border:1px solid #6c3c40;border-radius:2.5px;background:linear-gradient(#e0a092 0%,#d6806e 45%,#c2432a 50%,#c44a32 80%,#d26a50 100%);box-shadow:inset 0 0 0 1px rgba(255,255,255,0.35);"></div>
<svg class="r" style="left:598px;top:120px;" width="16" height="10" viewBox="0 0 16 10"><rect x="1.4" y="3.2" width="12.4" height="3.6" rx="1" fill="#f4f4f4" stroke="#667890" stroke-width="0.8"/></svg>
<svg class="r" style="left:633px;top:116px;" width="16" height="15" viewBox="0 0 16 15"><path d="M1.8 1.6 H13.8 V12.8 H1.8 Z M4.8 4.8 V9.8 H10.8 V4.8 Z" fill="#f4f4f4" fill-rule="evenodd" stroke="#667890" stroke-width="0.8"/></svg>
<svg class="r" style="left:668px;top:116px;" width="16" height="15" viewBox="0 0 16 15"><path d="M2 1.6 L5.8 1.6 L8.1 4.6 L10.4 1.6 L14.2 1.6 L10 6.9 L14.4 12.4 L10.4 12.4 L8.1 9.3 L5.8 12.4 L1.8 12.4 L6.2 6.9 Z" fill="#f8f8f8" stroke="#6e3430" stroke-width="0.9" stroke-linejoin="round"/></svg>
<div class="r" style="left:307px;top:274px;width:204px;height:26px;border:1px dotted #9c9c9c;"></div>
<div class="r" style="left:310px;top:277px;width:198px;height:19.5px;border:1px solid #7a7a7a;background:#fff;"></div>
<span class="t" style="left:320.60px;top:280px;font-size:12px;color:#1c1c1c;letter-spacing:-0.109px;">Monday</span>
<span class="t" style="left:372.20px;top:280px;font-size:11.48px;color:#1c1c1c;letter-spacing:-0.400px;">, 11</span>
<span class="t" style="left:412.90px;top:280px;font-size:11.42px;color:#1c1c1c;letter-spacing:-0.402px;">July</span>
<span class="t" style="left:455.50px;top:280px;font-size:11.55px;color:#1c1c1c;letter-spacing:-0.400px;">2022</span>
<svg class="r" style="left:497px;top:284px;" width="10" height="8" viewBox="0 0 10 8"><path d="M1.4 2 L4.8 5.6 L8.2 2" fill="none" stroke="#555" stroke-width="1"/></svg>
<div class="r" style="left:304px;top:284.4px;width:5.4px;height:5.4px;border:1px solid #333;border-radius:2px;background:#fff;"></div>
<div class="r" style="left:508.4px;top:284.4px;width:5.4px;height:5.4px;border:1px solid #333;border-radius:2px;background:#fff;"></div>
<div class="r" style="left:297.8px;top:265.7px;width:220.6px;height:35.5px;border:4.2px solid #ed1c24;"></div>
<div class="r" style="left:25px;top:339.1px;width:135.7px;height:16.4px;border:4.2px solid #ed1c24;"></div>
<span class="t" style="left:305.00px;top:237px;font-size:20.5px;color:#ed1c24;line-height:26px;font-weight:bold;letter-spacing:0.221px;">Drag and Drop Here</span>
<svg class="r" style="left:150px;top:200px;" width="200" height="150" viewBox="0 0 200 150"><g fill="none" stroke="#ed1c24" stroke-width="3.8" stroke-linecap="round" stroke-linejoin="round"><path d="M16.5 139.6 C26 118 32 105 40.4 88.2 C48 72 53 57 60.6 42.2 C65 33 69 27.5 73.5 23.9 C78 19.5 82 16.5 86.3 16.5 C92 16.5 98 18.5 102.8 21.1 C110 25.5 116 31 121.2 36.7 C131 46 141 56 149.7 64.3"/><path d="M121.2 53.8 L149.7 64.3 L139.2 37.6"/></g></svg>
<!-- p_right -->
<div class="r" style="left:1266px;top:69px;width:263px;height:21.5px;background:#3d3d3d;"></div>
<span class="t" style="left:1269.40px;top:73px;font-size:12px;color:#f0f0f0;letter-spacing:-0.005px;">Solution Explorer</span>
<svg class="r" style="left:1479.8px;top:77px;" width="8" height="6" viewBox="0 0 8 6"><path d="M0.2 0.5 H7.8 L4 4.8 Z" fill="#e6e6e6"/></svg>
<svg class="r" style="left:1495px;top:74px;" width="10" height="12" viewBox="0 0 10 12"><path d="M2.4 1.2 H7.6 M3.2 1.2 V6.4 M6.8 1.2 V6.4 M6 1.2 V6.4 M1.2 6.6 H8.8 M5 6.6 V11.4" fill="none" stroke="#e6e6e6" stroke-width="1.1"/></svg>
<svg class="r" style="left:1512.5px;top:75px;" width="10" height="10" viewBox="0 0 10 10"><path d="M1 1.2 L9 8.8 M9 1.2 L1 8.8" stroke="#e6e6e6" stroke-width="1.5"/></svg>
<div class="r" style="left:1266px;top:90.5px;width:263px;height:27.5px;background:#1c1c1c;"></div>
<svg class="r" style="left:1272.4px;top:96.5px;" width="16" height="16" viewBox="0 0 16 16"><circle cx="8" cy="8" r="6.2" fill="none" stroke="#3e3e3e" stroke-width="1.1"/><path d="M11.4 8 H4.8 M7.6 5 L4.6 8 L7.6 11" fill="none" stroke="#3e3e3e" stroke-width="1.1"/></svg>
<svg class="r" style="left:1293.8px;top:96.5px;" width="16" height="16" viewBox="0 0 16 16"><circle cx="8" cy="8" r="6.2" fill="none" stroke="#3e3e3e" stroke-width="1.1"/><path d="M4.6 8 H11.2 M8.4 5 L11.4 8 L8.4 11" fill="none" stroke="#3e3e3e" stroke-width="1.1"/></svg>
<svg class="r" style="left:1315.6px;top:96.5px;" width="16" height="16" viewBox="0 0 16 16"><path d="M1.4 8.4 L8 2 L14.6 8.4 M3.4 7 V14 H6.6 V9.8 H9.4 V14 H12.6 V7" fill="none" stroke="#d4d4d4" stroke-width="1.2"/></svg>
<svg class="r" style="left:1337.2px;top:96.5px;" width="16" height="16" viewBox="0 0 16 16"><path d="M6.6 5 V1.8 H14.4 V12.8 H9.6" fill="none" stroke="#d4d4d4" stroke-width="1.1"/><path d="M8.6 4.2 H12.6 M8.6 6.4 H12.6 M9.6 8.6 H12.6 M9.6 10.6 H12.6" stroke="#d4d4d4" stroke-width="1"/><path d="M6.6 6.2 L8.6 7 V14.2 L6.6 15 L3.4 11.8 L1.8 13 L1 12.6 V8.6 L1.8 8.2 L3.4 9.4 Z M6.6 8.8 L4.6 10.6 L6.6 12.4 Z" fill="#a97ee8" fill-rule="evenodd"/></svg>
<div class="r" style="left:1360.5px;top:95px;width:1.0px;height:20px;background:#444;"></div>
<svg class="r" style="left:1367.6px;top:96.5px;" width="16" height="16" viewBox="0 0 16 16"><circle cx="9.2" cy="9.4" r="4.6" fill="none" stroke="#d4d4d4" stroke-width="1.2"/><path d="M9.2 6.6 V9.6 H11.6" fill="none" stroke="#d4d4d4" stroke-width="1.1"/><path d="M1 1 H6.4 L4.4 3.6 V6 L3 5.2 V3.6 Z" fill="#4c9fe8"/></svg>
<svg class="r" style="left:1389.8px;top:102.6px;" width="6" height="4" viewBox="0 0 6 4"><path d="M0.1 0.3 H5.9 L3 3.6 Z" fill="#d0d0d0"/></svg>
<svg class="r" style="left:1399.8px;top:95.5px;" width="18" height="18" viewBox="0 0 18 18"><path d="M15.2 7 C14.4 3.8 11.8 2 9 2 C6 2 3.6 3.8 2.8 6.4 M15.4 2.4 V7.2 H10.6 M2.8 11 C3.6 14.2 6.2 16 9 16 C12 16 14.4 14.2 15.2 11.6 M2.6 15.6 V10.8 H7.4" fill="none" stroke="#d4d4d4" stroke-width="1.3"/></svg>
<svg class="r" style="left:1421.7px;top:96.0px;" width="18" height="17" viewBox="0 0 18 17"><path d="M4 3.6 V1.6 H16 V13 H14" fill="none" stroke="#d4d4d4" stroke-width="1.1"/><rect x="1.6" y="3.8" width="12.4" height="11.4" rx="1" fill="#2c2c2c" stroke="#d4d4d4" stroke-width="1.3"/><path d="M4.6 9.6 H11" stroke="#d4d4d4" stroke-width="1.2"/></svg>
<svg class="r" style="left:1444.0px;top:96.5px;" width="16" height="16" viewBox="0 0 16 16"><rect x="5.8" y="1.8" width="8.4" height="9.6" rx="1" fill="none" stroke="#d4d4d4" stroke-width="1.1"/><rect x="1.8" y="4.8" width="8.4" height="9.6" rx="1" fill="#2a2a2a" stroke="#d4d4d4" stroke-width="1.1"/></svg>
<div class="r" style="left:1467px;top:95px;width:1px;height:20px;background:#444;"></div>
<svg class="r" style="left:1473.3px;top:96.0px;" width="17" height="17" viewBox="0 0 17 17"><path d="M1.6 14 L8.2 7.4 C7.2 5 8.6 2 11.8 1.4 L13 1.8 L10.6 4.2 L11.8 5.6 L14.4 3.2 C15.2 6.4 12.6 9 9.8 8.6 L3.2 15.4 Z" fill="#d4d4d4"/></svg>
<div class="r" style="left:1492.6px;top:93.4px;width:19.8px;height:19.9px;border:1px solid #b4b4b4;background:#141414;"></div>
<svg class="r" style="left:1495.6px;top:96.5px;" width="16" height="16" viewBox="0 0 16 16"><path d="M2 11.6 H11.6 V9.6 H2 Z" fill="none" stroke="#d4d4d4" stroke-width="1.1"/><path d="M4.4 9.4 C4.4 7.2 8 7 9.4 7" fill="none" stroke="#d4d4d4" stroke-width="1.1"/><path d="M11 5.4 L13 3.6 M12.2 7.6 H14.6 M9.4 4.6 V2.4" stroke="#e8c870" stroke-width="1.1"/></svg>
<div class="r" style="left:1266px;top:118px;width:263px;height:21.900000000000006px;background:#3a3a3a;"></div>
<span class="t" style="left:1271.40px;top:123px;font-size:12px;color:#a8a8a8;letter-spacing:-0.121px;">Search Solution Explorer (Ctrl+;)</span>
<svg class="r" style="left:1500px;top:122px;" width="15" height="15" viewBox="0 0 15 15"><circle cx="9.4" cy="5.2" r="3.4" fill="none" stroke="#e0e0e0" stroke-width="2"/><path d="M6.8 7.8 L2.2 12.4" stroke="#e0e0e0" stroke-width="2.5" stroke-linecap="round"/></svg>
<svg class="r" style="left:1520.2px;top:127.5px;" width="6" height="4" viewBox="0 0 6 4"><path d="M0.1 0.3 H5.9 L3 3.6 Z" fill="#d0d0d0"/></svg>
<div class="r" style="left:1266px;top:139.8px;width:263px;height:319.2px;background:#1f1f1f;"></div>
<div class="r" style="left:1266px;top:161.2px;width:263px;height:19.0px;background:#3b3b3b;"></div>
<svg class="r" style="left:1280px;top:143.5px;" width="17" height="16" viewBox="0 0 17 16"><path d="M5 13 H1.6 V2.2 H14.4 V8" fill="none" stroke="#d4d4d4" stroke-width="1.1"/><path d="M1.6 4 H14.4" stroke="#d4d4d4" stroke-width="1.6"/><path d="M12.8 5.8 L15.4 6.8 V14 L12.8 15 L8.8 11.6 L7 13 L6 12.6 V8.2 L7 7.8 L8.8 9.2 Z M12.8 8.6 L10.6 10.4 L12.8 12.2 Z" fill="#a97ee8" fill-rule="evenodd"/></svg>
<span class="t" style="left:1301.80px;top:144px;font-size:12px;color:#f0f0f0;letter-spacing:0.026px;">Solution &#x27;WinFormsApp2&#x27; (1 of 1 project)</span>
<svg class="r" style="left:1276.5px;top:167px;" width="8" height="8" viewBox="0 0 8 8"><path d="M7 0.8 V7 H0.8 Z" fill="#e6e6e6"/></svg>
<svg class="r" style="left:1299px;top:163.5px;" width="16" height="15" viewBox="0 0 16 15"><rect x="0.8" y="1.4" width="14.2" height="11.6" rx="1" fill="#2a2f38" stroke="#d4d4d4" stroke-width="1.1"/><text x="2.6" y="10.4" font-family="Liberation Sans,sans-serif" font-size="7.6" font-weight="bold" fill="#5aa0e0">VB</text></svg>
<span class="t" style="left:1319.50px;top:163px;font-size:12px;color:#ffffff;font-weight:bold;letter-spacing:-0.096px;">WinFormsApp2</span>
<svg class="r" style="left:1294.5px;top:184.5px;" width="7" height="11" viewBox="0 0 7 11"><path d="M0.8 0.9 V10.1 L5.4 5.5 Z" fill="none" stroke="#cccccc" stroke-width="1"/></svg>
<svg class="r" style="left:1315px;top:183px;" width="19" height="14" viewBox="1315 183 19 14"><g fill="#1f1f1f" stroke="#d4d4d4" stroke-width="1.1"><rect x="1316.6" y="189.4" width="3.6" height="3.4"/><rect x="1324.6" y="185" width="7.4" height="5.8"/><rect x="1321.6" y="190" width="7.4" height="4.6"/></g><path d="M1320.2 190.6 C1322 190.4 1322.4 188 1324.4 187.8" fill="none" stroke="#d4d4d4" stroke-width="1.1"/></svg>
<span class="t" style="left:1337.80px;top:183px;font-size:12px;color:#f0f0f0;letter-spacing:-0.148px;">Dependencies</span>
<svg class="r" style="left:1315px;top:202px;" width="19" height="17" viewBox="1315 202 19 17"><path d="M1318 208 V204.6 H1322.6 L1324 206 H1331 V213.6 H1325.6" fill="none" stroke="#d8bf82" stroke-width="1.2"/><path d="M1318 206.4 H1324" stroke="#d8bf82" stroke-width="1"/><path d="M1323.2 217.2 L1320.4 213.6 C1318.4 214 1316.4 212.4 1316.6 210 L1318.6 212 L1320 211.4 L1320.2 209.8 L1318.4 208.2 C1320.8 207.6 1322.8 209.6 1322.2 212 L1325 215.6 Z" fill="#eaeaea"/></svg>
<span class="t" style="left:1337.80px;top:202px;font-size:12px;color:#f0f0f0;letter-spacing:-0.097px;">My Project</span>
<svg class="r" style="left:1294.5px;top:222.9px;" width="7" height="11" viewBox="0 0 7 11"><path d="M0.8 0.9 V10.1 L5.4 5.5 Z" fill="none" stroke="#cccccc" stroke-width="1"/></svg>
<span class="t" style="left:1317.70px;top:222px;font-size:10.26px;color:#5aa0e0;font-weight:bold;letter-spacing:-0.651px;">VB</span>
<span class="t" style="left:1337.80px;top:221px;font-size:12px;color:#f0f0f0;letter-spacing:-0.084px;">ApplicationEvents.vb</span>
<svg class="r" style="left:1294.5px;top:242.1px;" width="7" height="11" viewBox="0 0 7 11"><path d="M0.8 0.9 V10.1 L5.4 5.5 Z" fill="none" stroke="#cccccc" stroke-width="1"/></svg>
<svg class="r" style="left:1316px;top:240px;" width="17" height="15" viewBox="0 0 17 15"><rect x="1.2" y="1.2" width="14" height="12.4" rx="0.8" fill="#3a3a3a" stroke="#d4d4d4" stroke-width="1.1"/><path d="M1.2 3.4 H15.2" stroke="#d4d4d4" stroke-width="1.8"/><rect x="3.4" y="7.2" width="4.4" height="3.6" fill="none" stroke="#a97ee8" stroke-width="1"/><rect x="9.6" y="6" width="3.4" height="3" fill="#a97ee8"/></svg>
<span class="t" style="left:1337.80px;top:240px;font-size:12px;color:#f0f0f0;letter-spacing:-0.368px;">Form1.vb</span>
<div class="r" style="left:1266px;top:457.5px;width:263.5px;height:1.0px;background:#3a3a3a;"></div>
<div class="r" style="left:1529px;top:69px;width:1px;height:389.5px;background:#3a3a3a;"></div>
<div class="r" style="left:1265px;top:91px;width:1px;height:367.5px;background:#2e2e2e;"></div>
<div class="r" style="left:1266px;top:464.5px;width:101px;height:17.0px;background:#1f1f1f;"></div>
<div class="r" style="left:1266px;top:481.5px;width:101px;height:1.1999999999999886px;background:#c8c8c8;"></div>
<div class="r" style="left:1368.4px;top:464.5px;width:73.19999999999982px;height:18.0px;background:#2d2d2d;"></div>
<div class="r" style="left:1443px;top:464.5px;width:65px;height:18.0px;background:#2d2d2d;"></div>
<span class="t" style="left:1270.90px;top:467px;font-size:12px;color:#f0f0f0;letter-spacing:-0.005px;">Solution Explorer</span>
<span class="t" style="left:1373.50px;top:467px;font-size:12px;color:#f0f0f0;letter-spacing:-0.341px;">Git Changes</span>
<span class="t" style="left:1448.00px;top:467px;font-size:11.86px;color:#f0f0f0;letter-spacing:-0.398px;">Class View</span>
<div class="r" style="left:1266px;top:491px;width:263px;height:22px;background:#3d3d3d;"></div>
<span class="t" style="left:1269.40px;top:495px;font-size:12px;color:#f0f0f0;letter-spacing:-0.077px;">Properties</span>
<svg class="r" style="left:1479.8px;top:498.5px;" width="8" height="6" viewBox="0 0 8 6"><path d="M0.2 0.5 H7.8 L4 4.8 Z" fill="#e6e6e6"/></svg>
<svg class="r" style="left:1495px;top:495.5px;" width="10" height="12" viewBox="0 0 10 12"><path d="M2.4 1.2 H7.6 M3.2 1.2 V6.4 M6.8 1.2 V6.4 M6 1.2 V6.4 M1.2 6.6 H8.8 M5 6.6 V11.4" fill="none" stroke="#e6e6e6" stroke-width="1.1"/></svg>
<svg class="r" style="left:1512.5px;top:496.5px;" width="10" height="10" viewBox="0 0 10 10"><path d="M1 1.2 L9 8.8 M9 1.2 L1 8.8" stroke="#e6e6e6" stroke-width="1.5"/></svg>
<div class="r" style="left:1266px;top:513px;width:263px;height:21.799999999999955px;background:#333333;"></div>
<span class="t" style="left:1272.70px;top:518px;font-size:12px;color:#ffffff;font-weight:bold;letter-spacing:-0.157px;">DateTimePicker1</span>
<div class="r" style="left:1374.3px;top:515px;width:137.6px;height:19px;overflow:hidden;"><span class="t" style="left:0.00px;top:3px;font-size:11.89px;color:#f0f0f0;letter-spacing:-0.400px;">System.Windows.Forms.DateTimePicker</span></div>
<svg class="r" style="left:1519px;top:522.5px;" width="6" height="4" viewBox="0 0 6 4"><path d="M0.1 0.3 H5.9 L3 3.6 Z" fill="#d0d0d0"/></svg>
<div class="r" style="left:1266px;top:534.8px;width:263px;height:26.700000000000045px;background:#262626;"></div>
<div class="r" style="left:1268.3px;top:537.3px;width:21.2px;height:19.8px;border:1px solid #5c5c5c;background:#191919;"></div>
<svg class="r" style="left:1272px;top:540.5px;" width="16" height="16" viewBox="0 0 16 16"><rect x="1" y="1.4" width="4.4" height="4.4" fill="none" stroke="#d4d4d4" stroke-width="1"/><path d="M2 3.6 H4.4 M3.2 2.4 V4.8" stroke="#d4d4d4" stroke-width="0.9"/><rect x="1" y="9.4" width="4.4" height="4.4" fill="none" stroke="#d4d4d4" stroke-width="1"/><path d="M2 11.6 H4.4 M3.2 10.4 V12.8" stroke="#d4d4d4" stroke-width="0.9"/><path d="M7.6 1.8 H13.6 M8.6 4 H13.6 M8.6 6.2 H13.6 M7.6 9.8 H13.6 M8.6 12 H13.6 M8.6 14.2 H12" stroke="#d4d4d4" stroke-width="1.1"/></svg>
<svg class="r" style="left:1294px;top:540px;" width="17" height="17" viewBox="0 0 17 17"><rect x="1.2" y="1.2" width="8" height="7" fill="none" stroke="#d4d4d4" stroke-width="1"/><text x="2.6" y="7.2" font-family="Liberation Sans,sans-serif" font-size="6.4" font-weight="bold" fill="#d4d4d4">A</text><text x="1" y="15.4" font-family="Liberation Sans,sans-serif" font-size="6.2" font-weight="bold" fill="#d4d4d4">iZ</text><path d="M12.4 3 V12.4 M9.4 10 L12.4 13.6 L15.4 10" fill="none" stroke="#4c9fe8" stroke-width="2"/></svg>
<div class="r" style="left:1317.2px;top:539px;width:1.0px;height:19px;background:#444;"></div>
<div class="r" style="left:1320.3px;top:537.3px;width:20.6px;height:19.8px;border:1px solid #5c5c5c;background:#191919;"></div>
<svg class="r" style="left:1323.5px;top:540px;" width="16" height="16" viewBox="0 0 16 16"><path d="M4.4 2 H10.4 L13.8 5.4 V14.6 H9" fill="none" stroke="#d4d4d4" stroke-width="1.1"/><path d="M10.2 2 V5.6 H13.8" fill="none" stroke="#d4d4d4" stroke-width="1"/><path d="M2.4 15.4 L5.4 11.6 C3.4 11 2.4 9 3.4 7 L5.2 8.8 L6.6 8 L6.4 6.2 L4.6 5.2 C7 4.2 9 6 8.6 8.4 C8.4 9.8 7.6 10.6 7 11 L4.2 15.4 Z" fill="#d4d4d4"/></svg>
<svg class="r" style="left:1346px;top:538px;" width="18" height="20" viewBox="1346 538 18 20"><path d="M1361.8 540.5 L1354 541 L1348.3 549.5 L1353.5 549.8 L1349.7 556.4 L1361.8 546.5 L1356.8 546.3 Z" fill="#f2b266" stroke="#8a5f28" stroke-width="0.7" stroke-linejoin="round"/></svg>
<div class="r" style="left:1368.5px;top:539px;width:1.0px;height:19px;background:#444;"></div>
<svg class="r" style="left:1373px;top:538.5px;" width="19" height="19" viewBox="0 0 19 19"><path d="M1.4 15.4 L8.2 8.6 C7.2 5.4 9.4 2 12.8 2 C15.8 2 17.6 4.6 17 7.4 C16.4 10.2 13.6 11.6 10.8 10.8 L9.4 12.2 H7.6 V14 H5.8 V15.8 L4.4 17.2 H1.4 Z" fill="#868686"/><circle cx="13.4" cy="5.6" r="1.4" fill="#262626"/></svg>
<div class="r" style="left:1266px;top:561.5px;width:246px;height:167.5px;background:#1f1f1f;"></div>
<div class="r" style="left:1266px;top:561.5px;width:14px;height:167.5px;background:#262626;"></div>
<div class="r" style="left:1280px;top:709.3px;width:112.29999999999995px;height:18.300000000000068px;background:#333333;"></div>
<span class="t" style="left:1283.80px;top:564px;font-size:12px;color:#f0f0f0;letter-spacing:-0.063px;">ContextMenuStrip</span>
<span class="t" style="left:1395.40px;top:564px;font-size:12px;color:#f0f0f0;letter-spacing:-0.098px;">(none)</span>
<div class="r" style="left:1280px;top:580.0px;width:232px;height:1.0px;background:#2b2b2b;"></div>
<span class="t" style="left:1283.80px;top:582px;font-size:12px;color:#f0f0f0;letter-spacing:-0.159px;">CustomFormat</span>
<div class="r" style="left:1280px;top:598.4px;width:232px;height:1.0px;background:#2b2b2b;"></div>
<span class="t" style="left:1283.80px;top:601px;font-size:12px;color:#f0f0f0;letter-spacing:-0.190px;">Enabled</span>
<span class="t" style="left:1395.40px;top:601px;font-size:11.4px;color:#f0f0f0;letter-spacing:-0.406px;">True</span>
<div class="r" style="left:1280px;top:616.8px;width:232px;height:1.0px;background:#2b2b2b;"></div>
<span class="t" style="left:1283.80px;top:619px;font-size:12px;color:#f0f0f0;letter-spacing:0.097px;">ImeMode</span>
<span class="t" style="left:1395.40px;top:619px;font-size:12px;color:#f0f0f0;letter-spacing:0.072px;">NoControl</span>
<div class="r" style="left:1280px;top:635.2px;width:232px;height:1.0px;background:#2b2b2b;"></div>
<span class="t" style="left:1283.80px;top:638px;font-size:12px;color:#f0f0f0;letter-spacing:-0.085px;">MaxDate</span>
<span class="t" style="left:1395.40px;top:638px;font-size:12px;color:#f0f0f0;letter-spacing:0.060px;">31/12/9998</span>
<div class="r" style="left:1280px;top:653.6px;width:232px;height:1.0px;background:#2b2b2b;"></div>
<span class="t" style="left:1283.80px;top:656px;font-size:12px;color:#f0f0f0;letter-spacing:0.135px;">MinDate</span>
<span class="t" style="left:1395.40px;top:656px;font-size:12px;color:#f0f0f0;letter-spacing:-0.018px;">01/01/1753</span>
<div class="r" style="left:1280px;top:672.0px;width:232px;height:1.0px;background:#2b2b2b;"></div>
<span class="t" style="left:1283.80px;top:674px;font-size:12px;color:#f0f0f0;letter-spacing:-0.215px;">TabIndex</span>
<span class="t" style="left:1395.40px;top:674px;font-size:12px;color:#ffffff;font-weight:bold;">0</span>
<div class="r" style="left:1280px;top:690.4px;width:232px;height:1.0px;background:#2b2b2b;"></div>
<span class="t" style="left:1283.80px;top:693px;font-size:12px;color:#f0f0f0;letter-spacing:-0.188px;">TabStop</span>
<span class="t" style="left:1395.40px;top:693px;font-size:11.4px;color:#f0f0f0;letter-spacing:-0.406px;">True</span>
<div class="r" style="left:1280px;top:708.8px;width:232px;height:1.0px;background:#2b2b2b;"></div>
<span class="t" style="left:1283.80px;top:711px;font-size:12px;color:#f0f0f0;letter-spacing:-0.399px;">Value</span>
<span class="t" style="left:1395.40px;top:711px;font-size:12px;color:#f0f0f0;letter-spacing:0.020px;">11/07/2022 1:10 pm</span>
<div class="r" style="left:1280px;top:727.2px;width:232px;height:1.0px;background:#2b2b2b;"></div>
<div class="r" style="left:1392px;top:561.5px;width:1px;height:166.10000000000002px;background:#2a2a2a;"></div>
<div class="r" style="left:1512px;top:561.5px;width:17px;height:167.5px;background:#2b2b2b;"></div>
<div class="r" style="left:1516.2px;top:638.4px;width:8.5px;height:23.100000000000023px;background:#4d4d4d;"></div>
<svg class="r" style="left:1516px;top:568px;" width="9" height="6" viewBox="0 0 9 6"><path d="M0.3 5.6 H8.7 L4.5 0.6 Z" fill="#c8c8c8"/></svg>
<svg class="r" style="left:1516px;top:716.5px;" width="9" height="6" viewBox="0 0 9 6"><path d="M0.3 0.4 H8.7 L4.5 5.4 Z" fill="#c8c8c8"/></svg>
<div class="r" style="left:1266px;top:729px;width:263px;height:62px;background:#1f1f1f;"></div>
<div class="r" style="left:1266px;top:728.5px;width:263px;height:1.0px;background:#2e2e2e;"></div>
<span class="t" style="left:1272.70px;top:736px;font-size:12px;color:#ffffff;font-weight:bold;letter-spacing:-0.264px;">Value</span>
<span class="t" style="left:1272.70px;top:754px;font-size:12px;color:#f0f0f0;letter-spacing:0.034px;">The current date/time value for this control.</span>
<div class="r" style="left:1266px;top:790.5px;width:263.5px;height:1.0px;background:#3a3a3a;"></div>
<div class="r" style="left:1529px;top:491px;width:1px;height:300.5px;background:#3a3a3a;"></div>
<div class="r" style="left:1265px;top:513px;width:1px;height:278.5px;background:#2e2e2e;"></div>
<!-- p_status -->
<div class="r" style="left:0px;top:798px;width:1536px;height:19px;background:#424242;"></div>
<svg class="r" style="left:2px;top:804px;" width="18" height="12" viewBox="0 0 18 12"><path d="M4.4 1.6 H16.4 L13.6 10.6 H1.6 Z" fill="none" stroke="#e6e6e6" stroke-width="1.2"/></svg>
<span class="t" style="left:27.00px;top:802px;font-size:11.97px;color:#f0f0f0;letter-spacing:-0.401px;">Ready</span>
<svg class="r" style="left:1175px;top:804px;" width="11" height="12" viewBox="0 0 11 12"><path d="M5.4 11.4 V1.8 M1.6 5.6 L5.4 1.6 L9.2 5.6" fill="none" stroke="#e6e6e6" stroke-width="1.4"/></svg>
<span class="t" style="left:1194.50px;top:802px;font-size:12px;color:#f0f0f0;letter-spacing:-0.013px;">Add to Source Control</span>
<svg class="r" style="left:1319.5px;top:807.5px;" width="8" height="5" viewBox="0 0 8 5"><path d="M0.3 4.6 H7.7 L4 0.5 Z" fill="#e6e6e6"/></svg>
<svg class="r" style="left:1349px;top:802px;" width="16" height="16" viewBox="0 0 16 16"><path d="M8 1 L15 8 L8 15 L1 8 Z" fill="#e6e6e6"/><path d="M6.4 4.6 L9.6 7.8 M8 6.2 V11" stroke="#424242" stroke-width="1.1"/><circle cx="8" cy="11" r="1.1" fill="#424242"/><circle cx="9.8" cy="8" r="1.1" fill="#424242"/></svg>
<span class="t" style="left:1370.50px;top:802px;font-size:12px;color:#f0f0f0;letter-spacing:-0.078px;">Select Repository</span>
<svg class="r" style="left:1470px;top:807.5px;" width="8" height="5" viewBox="0 0 8 5"><path d="M0.3 4.6 H7.7 L4 0.5 Z" fill="#e6e6e6"/></svg>
<svg class="r" style="left:1497px;top:801px;" width="16" height="16" viewBox="0 0 16 16"><path d="M2.4 13.4 C4 12 4 10 4 7.6 C4 4.6 5.6 2.6 8 2.6 C10.4 2.6 12 4.6 12 7.6 C12 10 12 12 13.6 13.4 Z" fill="none" stroke="#d8bc7c" stroke-width="1.2"/></svg>
<div class="r" style="left:1505.5px;top:805.5px;width:13px;height:13px;border-radius:7px;background:#f7879a;"></div>
<span class="t" style="left:1508.80px;top:804px;font-size:10.5px;color:#3a1850;">2</span>
</body></html>
